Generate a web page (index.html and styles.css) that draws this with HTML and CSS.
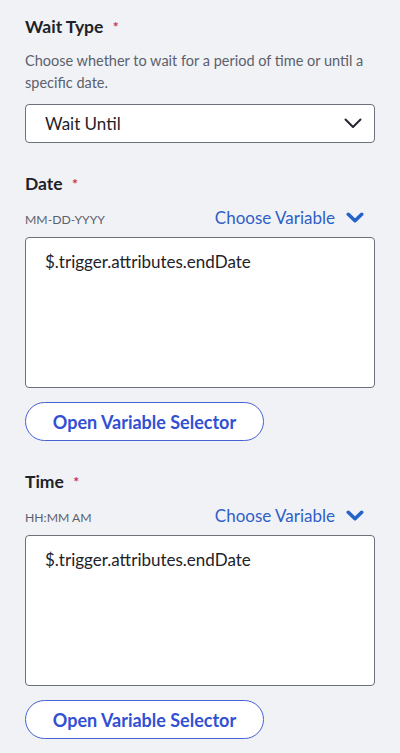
FILE: index.html
```html
<!DOCTYPE html>
<html lang="en">
<head>
<meta charset="utf-8">
<title>Wait step</title>
<link rel="stylesheet" href="styles.css">
</head>
<body>
<main class="panel">
  <section class="field field-first">
    <div class="label">Wait Type <span class="req">*</span></div>
    <p class="desc">Choose whether to wait for a period of time or until a specific date.</p>
    <div class="select">
      <span class="select-value">Wait Until</span>
      <svg class="select-chevron" width="18" height="11" viewBox="0 0 18 11"><path d="M1.5 1.5 L9 9 L16.5 1.5" fill="none" stroke="#23272e" stroke-width="2" stroke-linecap="round" stroke-linejoin="round"/></svg>
    </div>
  </section>

  <section class="field">
    <div class="label">Date <span class="req">*</span></div>
    <div class="hint-row">
      <span class="hint">MM-DD-YYYY</span>
      <span class="choose">Choose Variable
        <svg class="choose-chevron" width="18" height="11" viewBox="0 0 18 11"><path d="M2.3 2.3 L9 8.7 L15.7 2.3" fill="none" stroke="#2563c9" stroke-width="3.6" stroke-linecap="round" stroke-linejoin="round"/></svg>
      </span>
    </div>
    <div class="textarea">$.trigger.attributes.endDate</div>
    <button class="btn-outline" type="button">Open Variable Selector</button>
  </section>

  <section class="field">
    <div class="label">Time <span class="req">*</span></div>
    <div class="hint-row">
      <span class="hint">HH:MM AM</span>
      <span class="choose">Choose Variable
        <svg class="choose-chevron" width="18" height="11" viewBox="0 0 18 11"><path d="M2.3 2.3 L9 8.7 L15.7 2.3" fill="none" stroke="#2563c9" stroke-width="3.6" stroke-linecap="round" stroke-linejoin="round"/></svg>
      </span>
    </div>
    <div class="textarea">$.trigger.attributes.endDate</div>
    <button class="btn-outline" type="button">Open Variable Selector</button>
  </section>
</main>
</body>
</html>
```

FILE: styles.css
```css
* { box-sizing: border-box; }

html, body {
  margin: 0;
  padding: 0;
  background: #f1f2f6;
}

body {
  font-family: Lato, "Liberation Sans", sans-serif;
  color: #1e2229;
  width: 400px;
  height: 753px;
  overflow: hidden;
}

.panel {
  padding: 15px 25px 0 25px;
  display: flex;
  flex-direction: column;
  gap: 29px;
}

.field {
  display: flex;
  flex-direction: column;
}

.label {
  font-size: 17.5px;
  font-weight: 700;
  line-height: 24px;
  height: 24px;
  color: #1e2229;
}

.req {
  color: #c8324a;
  font-size: 14px;
  margin-left: 5px;
  vertical-align: 1px;
}

.desc {
  margin: 11px 0 10px 0;
  font-size: 14.5px;
  line-height: 22px;
  color: #5b616c;
}

.select {
  height: 39px;
  border: 1px solid #6c7079;
  border-radius: 4px;
  background: #ffffff;
  display: flex;
  align-items: center;
  justify-content: space-between;
  padding: 0 12px 0 19px;
}

.select-value {
  font-size: 17px;
  color: #1e2229;
}

.select-chevron { display: block; }

.hint-row {
  margin-top: 9px;
  height: 24px;
  display: flex;
  align-items: center;
  justify-content: space-between;
  padding-right: 11px;
}

.hint {
  font-size: 12.2px;
  color: #5b616c;
  padding-top: 4px;
}

.choose {
  display: flex;
  align-items: center;
  gap: 11px;
  font-size: 17px;
  color: #2f5fc6;
}

.choose-chevron { display: block; }

.textarea {
  margin-top: 8px;
  height: 151px;
  border: 1px solid #6c7079;
  border-radius: 4px;
  background: #ffffff;
  padding: 12px 19px;
  font-size: 17px;
  line-height: 24px;
  color: #1e2229;
}

.btn-outline {
  margin-top: 14px;
  align-self: flex-start;
  width: 239px;
  height: 39px;
  border: 1px solid #4661d4;
  border-radius: 20px;
  background: #ffffff;
  color: #3150d3;
  font-family: Lato, "Liberation Sans", sans-serif;
  font-size: 18px;
  font-weight: 700;
  padding: 0;
  cursor: pointer;
}
```
